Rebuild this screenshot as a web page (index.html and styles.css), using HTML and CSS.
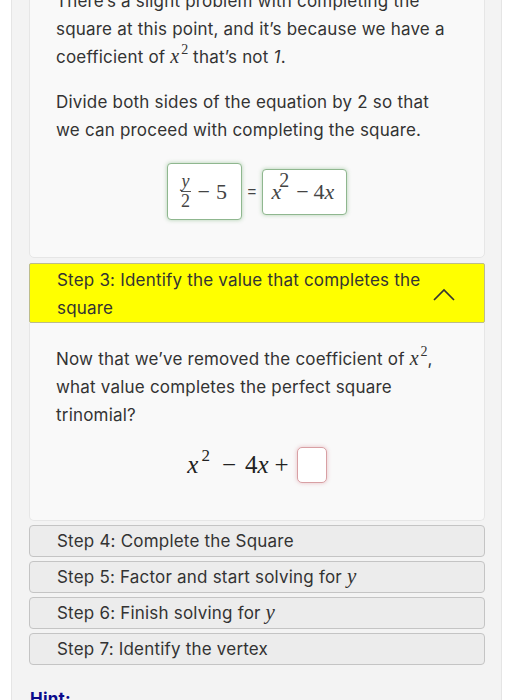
FILE: index.html
```html
<!DOCTYPE html>
<html>
<head>
<meta charset="utf-8">
<link rel="stylesheet" href="styles.css">
</head>
<body>
<div class="panel">
  <div class="card card-first">
    <div class="card-body">
      <p class="para">There’s a slight problem with completing the square at this point, and it’s because we have a coefficient of <span class="mi">x</span><sup class="msup">2</sup> that’s not <em class="it">1</em>.</p>
      <p class="para">Divide both sides of the equation by 2 so that we can proceed with completing the square.</p>
      <div class="eq eq-boxes">
        <span class="gbox gbox-left">
          <span class="frac"><span class="num">y</span><span class="den">2</span></span>
          <span class="op">−</span><span class="rn">5</span>
        </span>
        <span class="eqsign">=</span>
        <span class="gbox gbox-right">
          <span class="tx">x</span><span class="texp">2</span>
          <span class="op">−</span><span class="rn">4</span><span class="tx">x</span>
        </span>
      </div>
    </div>
  </div>

  <div class="card">
    <div class="step-head">
      <span class="step-head-text">Step 3: Identify the value that completes the square</span>
      <svg class="caret" width="22" height="13" viewBox="0 0 22 13"><polyline points="1,12 11,2 21,12" fill="none" stroke="#333" stroke-width="1.7"/></svg>
    </div>
    <div class="card-body card-body-open">
      <p class="para">Now that we’ve removed the coefficient of <span class="mi">x</span><sup class="msup">2</sup>, what value completes the perfect square trinomial?</p>
      <div class="eq eq-kx">
        <span class="kline"><span class="kmi">x</span><sup class="ksup">2</sup><span class="kop">−</span><span class="krn">4</span><span class="kmi">x</span><span class="kplus">+</span></span><span class="rbox"></span>
      </div>
    </div>
  </div>

  <div class="step">Step 4: Complete the Square</div>
  <div class="step">Step 5: Factor and start solving for <span class="mi">y</span></div>
  <div class="step">Step 6: Finish solving for <span class="mi">y</span></div>
  <div class="step">Step 7: Identify the vertex</div>

  <div class="hint">Hint:</div>
</div>
</body>
</html>
```

FILE: styles.css
```css
html, body {
  margin: 0;
  padding: 0;
  background: #ffffff;
}
body {
  font-family: "Inter", "Liberation Sans", sans-serif;
  color: #333333;
  font-size: 17px;
  line-height: 28px;
  letter-spacing: 0.2px;
  overflow: hidden;
}
.panel {
  margin: -34px 12px 0 11px;
  background: #f3f3f3;
  border-left: 1px solid #e5e5e5;
  border-right: 1px solid #e5e5e5;
  padding: 0 16px 40px 17px;
  display: flex;
  flex-direction: column;
  gap: 4px;
}
.card {
  display: flex;
  flex-direction: column;
}
.card-body {
  background: #f9f9f9;
  border: 1px solid #e6e6e6;
  border-radius: 0 0 5px 5px;
  padding: 20px 33px 37px 26px;
}
.card-first .card-body {
  padding-top: 20px;
}
.eq-boxes {
  margin-top: 19px;
  margin-right: -7px;
}
.card-first {
  margin-bottom: 1px;
}
.card-body-open {
  border-top: none;
  padding-top: 22px;
  padding-bottom: 37px;
}
.para {
  margin: 0 0 17px 0;
}
.mi {
  font-family: "Liberation Serif", "DejaVu Serif", serif;
  font-style: italic;
  font-size: 20px;
  line-height: 20px;
  letter-spacing: 0;
}
.msup {
  font-family: "Liberation Serif", "DejaVu Serif", serif;
  font-size: 14px;
  line-height: 0;
  vertical-align: 9px;
  margin-left: 2px;
  letter-spacing: 0;
}
.it {
  font-style: italic;
}
.eq {
  display: flex;
  justify-content: center;
  align-items: center;
  letter-spacing: 0;
}
.gbox {
  display: inline-flex;
  align-items: center;
  box-sizing: border-box;
  background: #ffffff;
  border: 1.5px solid #8fb78f;
  border-radius: 4px;
  box-shadow: 0 0 4px rgba(90, 160, 90, 0.45);
  font-family: "Liberation Serif", "DejaVu Serif", serif;
  color: #444;
}
.gbox-left {
  height: 57px;
  width: 75px;
  padding: 0 0 0 13px;
}
.gbox-right {
  height: 46px;
  width: 85px;
  padding: 0 0 0 8px;
}
.frac {
  display: inline-flex;
  flex-direction: column;
  align-items: center;
  font-size: 18px;
  line-height: 15px;
  margin-right: 7px;
}
.num {
  font-style: italic;
  border-bottom: 1px solid #555;
  padding: 0 1px 2px;
}
.den {
  padding-top: 2px;
}
.op {
  font-size: 22px;
  margin: 0 6px 0 0;
}
.rn {
  font-size: 22px;
}
.tx {
  font-style: italic;
  font-size: 22px;
}
.texp {
  font-size: 20px;
  position: relative;
  top: -12px;
  margin: 0 7px 0 -2px;
}
.gbox-right .op {
  margin-right: 5px;
}
.eqsign {
  font-family: "Liberation Sans", sans-serif;
  font-size: 15px;
  margin: 0 6px;
  color: #444;
}
.eq-kx {
  margin-top: 18px;
  margin-right: -7px;
  font-family: "Liberation Serif", "DejaVu Serif", serif;
  color: #222;
  font-size: 25px;
  line-height: 36px;
}
.kline {
  display: inline-block;
}
.kmi {
  font-style: italic;
}
.ksup {
  font-size: 17px;
  line-height: 0;
  vertical-align: 12px;
  margin-left: 3px;
}
.kop {
  margin: 0 9px 0 12px;
}
.kplus {
  margin: 0 8px 0 6px;
}
.rbox {
  display: inline-block;
  box-sizing: border-box;
  width: 30px;
  height: 36px;
  background: #ffffff;
  border: 1.5px solid #d8a0a4;
  border-radius: 5px;
  box-shadow: 0 0 4px rgba(210, 120, 130, 0.45);
}
.step-head {
  display: flex;
  align-items: center;
  gap: 4px;
  background: #ffff00;
  border: 1px solid #bcbc8c;
  border-radius: 2px;
  padding: 2px 29px 0 27px;
  min-height: 56px;
  color: #333;
}
.step-head-text {
  flex: 1;
}
.caret {
  flex: none;
}
.step {
  box-sizing: border-box;
  height: 32px;
  line-height: 30px;
  background: #ececec;
  border: 1px solid #c4c4c4;
  border-radius: 4px;
  padding: 0 27px;
  color: #333;
}
.step .mi {
  font-size: 21px;
}
.hint {
  margin-top: 16px;
  margin-left: 1px;
  color: #0b0b8c;
  font-weight: 700;
}
```
